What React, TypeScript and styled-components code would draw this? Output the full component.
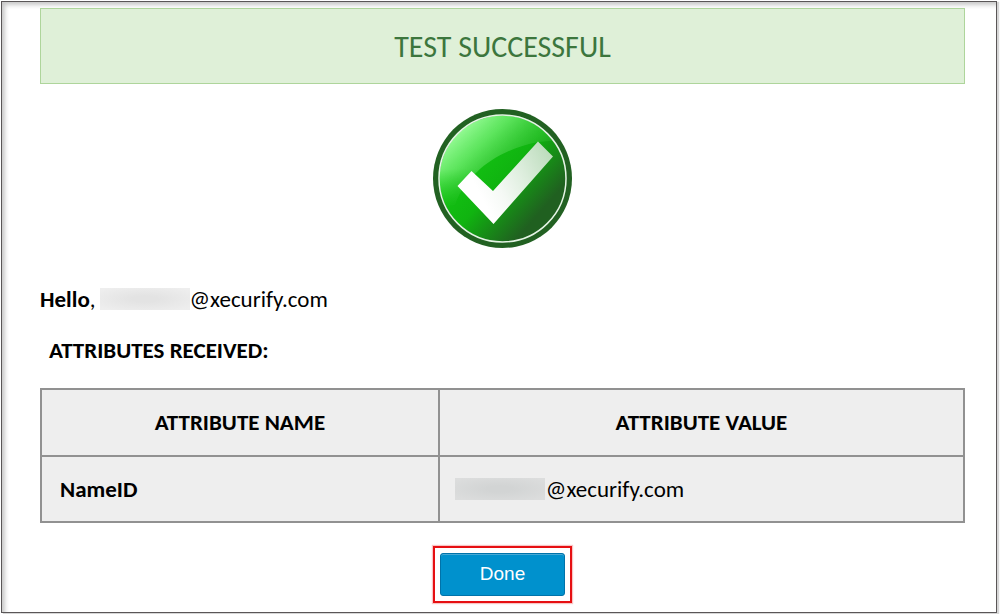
import React from 'react';
import styled, { createGlobalStyle } from 'styled-components';

const GlobalStyle = createGlobalStyle`
  *, *::before, *::after { box-sizing: border-box; }
  body {
    margin: 0;
    background: #fff;
    color: #000;
    font-family: Calibri, Carlito, Lato, sans-serif;
    font-size: 23px;
    line-height: 24px;
  }
`;

const Page = styled.div`
  display: flex;
  min-height: 100vh;
  padding: 1px 3px 1px 1px;
`;

const Frame = styled.main`
  flex: 1;
  padding: 6px 31px 8px 38px;
  border: 1px solid #5a5657;
  box-shadow: inset 4px 4px 4px -1px #c9c9c9, 2px 1px 1px #d6d6d6;
`;

const Banner = styled.h1`
  margin: 0;
  padding: 22px 16px 20px;
  border: 1px solid #aed59b;
  background: #dff0d8;
  color: #3c763d;
  font-size: 30px;
  font-weight: 400;
  line-height: 32px;
  text-align: center;
`;

const Badge = styled.svg`
  display: block;
  width: 139px;
  height: 139px;
  margin: 25px auto 39px;
`;

const Greeting = styled.p`
  display: flex;
  align-items: center;
  margin: 0;
`;

const Masked = styled.span<{ $tone: 'light' | 'dark' }>`
  width: 90px;
  height: 22px;
  background: ${({ $tone }) =>
    $tone === 'light'
      ? 'radial-gradient(#e3e3e3 20%, #eeeeee 90%)'
      : 'radial-gradient(#d2d4d4 20%, #dcdddd 90%)'};
`;

const Comma = styled.span`
  margin-right: 4px;
`;

const SectionTitle = styled.h2`
  margin: 27px 9px 26px;
  font-size: 23px;
  font-weight: 700;
  line-height: 24px;
`;

const AttributeTable = styled.table`
  width: 100%;
  border-collapse: collapse;
  table-layout: fixed;
  background: #eee;

  th, td {
    padding: 20px 15px;
    border: 2px solid #919191;
  }

  thead th { padding-bottom: 21px; }
`;

const NameColumn = styled.col`
  width: 43.1%;
`;

const RowHeading = styled.th`
  && { padding-left: 18px; }
  text-align: left;
`;

const Value = styled.div`
  display: flex;
  align-items: center;
  gap: 1px;
`;

const Highlight = styled.div`
  width: fit-content;
  margin: 23px auto 0;
  padding: 5px;
  border: 2px solid #e60f12;
  box-shadow: 0 0 1px 1px #f9c4c4;
`;

const DoneButton = styled.button`
  display: block;
  padding: 9px 39px 10px;
  border: 1px solid #0073aa;
  border-radius: 3px;
  background: #0091cd;
  box-shadow: inset 0 1px 0 #49a9d4;
  color: #fff;
  font-family: Arial, "Liberation Sans", sans-serif;
  font-size: 19px;
  line-height: 22px;
  cursor: pointer;
`;

function SuccessBadge() {
  return (
    <Badge viewBox="0 0 139 139" role="img" aria-label="Success">
      <defs>
        <linearGradient id="disc" gradientUnits="userSpaceOnUse" x1="22" y1="30" x2="118" y2="114">
          <stop offset="0" stopColor="#14cc14" />
          <stop offset="0.48" stopColor="#10b410" />
          <stop offset="0.6" stopColor="#149a14" />
          <stop offset="0.88" stopColor="#206020" />
          <stop offset="1" stopColor="#206020" />
        </linearGradient>
        <linearGradient id="gloss" gradientUnits="userSpaceOnUse" x1="28" y1="16" x2="84" y2="76">
          <stop offset="0" stopColor="#a4ffa4" stopOpacity="0.95" />
          <stop offset="0.35" stopColor="#7cf27c" stopOpacity="0.7" />
          <stop offset="0.75" stopColor="#50d050" stopOpacity="0.34" />
          <stop offset="1" stopColor="#50c850" stopOpacity="0.08" />
        </linearGradient>
        <linearGradient id="glossFade" x1="0" y1="0" x2="0" y2="1">
          <stop offset="0" stopColor="#fff" />
          <stop offset="0.6" stopColor="#fff" />
          <stop offset="1" stopColor="#000" />
        </linearGradient>
        <linearGradient id="tick" gradientUnits="userSpaceOnUse" x1="44" y1="80" x2="116" y2="42">
          <stop offset="0" stopColor="#ffffff" />
          <stop offset="0.25" stopColor="#f5f9f5" />
          <stop offset="0.55" stopColor="#e0efe0" />
          <stop offset="1" stopColor="#bcdcbc" />
        </linearGradient>
        <mask id="glossMask"><rect width="139" height="100" fill="url(#glossFade)" /></mask>
        <clipPath id="face"><circle cx="69.5" cy="69.5" r="63" /></clipPath>
      </defs>
      <circle cx="69.5" cy="69.5" r="69.5" fill="#226122" />
      <circle cx="69.5" cy="69.5" r="63" fill="url(#disc)" />
      <g mask="url(#glossMask)">
        <path
          d="M0 100L22 96C28 80 34 72 44 63C58 49 80 38 105 33L139 30V0H0Z"
          fill="url(#gloss)"
          clipPath="url(#face)"
        />
      </g>
      <circle cx="69.5" cy="69.5" r="63.5" fill="none" stroke="#e5f5e5" strokeWidth="1.5" />
      <path d="M24.5 77L38.5 62L60 82L105 32.5L120 47.5L60.5 115Z" fill="url(#tick)" />
    </Badge>
  );
}

export default function App() {
  return (
    <>
      <GlobalStyle />
      <Page>
        <Frame>
          <Banner>TEST SUCCESSFUL</Banner>
          <SuccessBadge />
          <Greeting>
            <b>Hello</b>
            <Comma>,</Comma>
            <Masked $tone="light" />
            <span>@xecurify.com</span>
          </Greeting>
          <SectionTitle>ATTRIBUTES RECEIVED:</SectionTitle>
          <AttributeTable>
            <colgroup>
              <NameColumn />
              <col />
            </colgroup>
            <thead>
              <tr>
                <th scope="col">ATTRIBUTE NAME</th>
                <th scope="col">ATTRIBUTE VALUE</th>
              </tr>
            </thead>
            <tbody>
              <tr>
                <RowHeading scope="row">NameID</RowHeading>
                <td>
                  <Value>
                    <Masked $tone="dark" />
                    <span>@xecurify.com</span>
                  </Value>
                </td>
              </tr>
            </tbody>
          </AttributeTable>
          <Highlight>
            <DoneButton type="button">Done</DoneButton>
          </Highlight>
        </Frame>
      </Page>
    </>
  );
}
